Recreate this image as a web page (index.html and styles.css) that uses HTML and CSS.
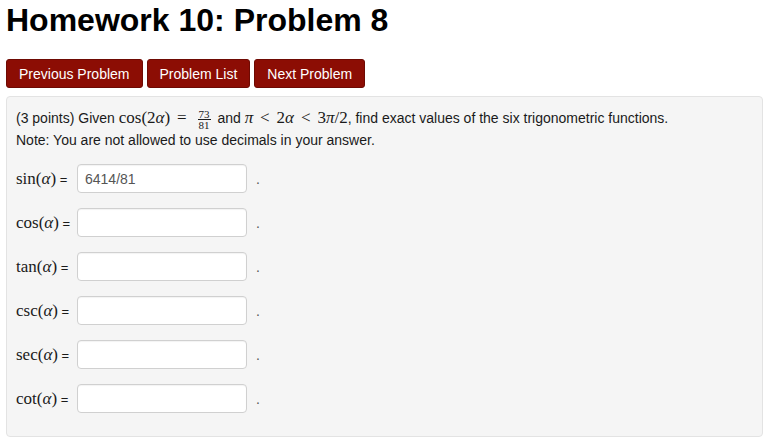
FILE: index.html
```html
<!doctype html>
<html lang="en">
<head>
    <meta charset="utf-8">
    <title>Homework 10: Problem 8</title>
    <link rel="stylesheet" href="styles.css">
</head>
<body>
<h1 class="page-title">Homework 10: Problem 8</h1>

<div class="nav">
    <a class="nav-btn" href="#">Previous Problem</a>
    <a class="nav-btn" href="#">Problem List</a>
    <a class="nav-btn" href="#">Next Problem</a>
</div>

<div class="problem">
    <p class="statement">
        (3 points) Given <span class="m">cos(2<i>α</i>)</span> <span class="m op">=</span>
        <span class="frac"><span class="num">73</span><span class="den">81</span></span>
        and <span class="m"><i>π</i></span> <span class="m op">&lt;</span> <span class="m">2<i>α</i></span>
        <span class="m op">&lt;</span> <span class="m">3<i>π</i>/2</span>, find exact values of the six trigonometric functions.
        <br>Note: You are not allowed to use decimals in your answer.
    </p>

    <div class="answers">
        <div class="answer">
            <label class="fn"><span class="m">sin(<i>α</i>)</span> =</label>
            <input type="text" class="field" value="6414/81">
            <span class="dot">.</span>
        </div>
        <div class="answer">
            <label class="fn"><span class="m">cos(<i>α</i>)</span> =</label>
            <input type="text" class="field">
            <span class="dot">.</span>
        </div>
        <div class="answer">
            <label class="fn"><span class="m">tan(<i>α</i>)</span> =</label>
            <input type="text" class="field">
            <span class="dot">.</span>
        </div>
        <div class="answer">
            <label class="fn"><span class="m">csc(<i>α</i>)</span> =</label>
            <input type="text" class="field">
            <span class="dot">.</span>
        </div>
        <div class="answer">
            <label class="fn"><span class="m">sec(<i>α</i>)</span> =</label>
            <input type="text" class="field">
            <span class="dot">.</span>
        </div>
        <div class="answer">
            <label class="fn"><span class="m">cot(<i>α</i>)</span> =</label>
            <input type="text" class="field">
            <span class="dot">.</span>
        </div>
    </div>
</div>
</body>
</html>
```

FILE: styles.css
```css
body {
    margin: 0;
    padding: 2px 2px 0 6px;
    font-family: "Liberation Sans", Arial, sans-serif;
    font-size: 14px;
    color: #222;
    background: #fff;
}
.page-title {
    margin: 0;
    font-size: 32px;
    line-height: 37px;
    font-weight: bold;
    color: #000;
}
.nav {
    display: flex;
    gap: 4px;
    margin-top: 20px;
}
.nav-btn {
    display: block;
    height: 29px;
    line-height: 29px;
    padding: 0 12px;
    background-color: #8c0d04;
    border: 1px solid #6e0a03;
    box-sizing: border-box;
    border-radius: 3px;
    color: #fff;
    text-decoration: none;
    font-size: 14px;
}
.problem {
    margin-top: 8px;
    padding: 11px 9px 23px 9px;
    background-color: #f5f5f5;
    border: 1px solid #e3e3e3;
    border-radius: 4px;
    height: 341px;
    box-sizing: border-box;
}
.statement {
    margin: 0;
    line-height: 21px;
    color: #1a1a1a;
}
.m {
    font-family: "Liberation Serif", "Times New Roman", serif;
    font-size: 17px;
    line-height: 16px;
}
.m i {
    font-style: italic;
}
.op {
    padding: 0 3px;
}
.frac {
    display: inline-block;
    vertical-align: -6px;
    font-family: "Liberation Serif", "Times New Roman", serif;
    font-size: 11px;
    line-height: 10px;
    text-align: center;
    margin: 0 3px 0 4px;
}
.frac .num,
.frac .den {
    display: block;
    padding: 0 1px;
}
.frac .num {
    border-bottom: 1px solid #1a1a1a;
}
.answers {
    display: flex;
    flex-direction: column;
    gap: 15px;
    margin-top: 13px;
}
.answer {
    display: flex;
    align-items: center;
}
.fn {
    width: 61px;
    color: #1a1a1a;
    font-size: 13px;
}
.fn .m {
    font-size: 17px;
}
.field {
    width: 170px;
    height: 29px;
    box-sizing: border-box;
    padding: 0 7px;
    border: 1px solid #d0d0d0;
    border-radius: 4px;
    background: #fff;
    font-family: "Liberation Sans", Arial, sans-serif;
    font-size: 14px;
    color: #555;
    box-shadow: inset 0 1px 1px rgba(0, 0, 0, 0.05);
}
.dot {
    margin-left: 9px;
    color: #555;
}
```
